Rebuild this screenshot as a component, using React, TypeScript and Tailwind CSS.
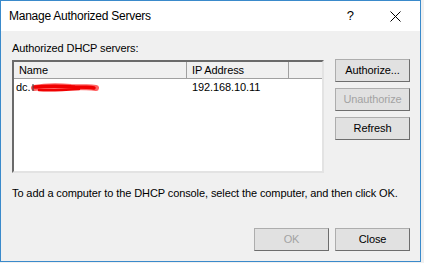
import React from "react";

// Windows-style "Manage Authorized Servers" DHCP dialog
const sans = "font-['Liberation_Sans',Arial,sans-serif]";

function WinButton({
  label,
  disabled = false,
}: {
  label: string;
  disabled?: boolean;
}) {
  return (
    <div
      className={`flex h-[23px] w-[75px] items-center justify-center border border-[#adadad] border-b-[#6d6d6d] border-r-[#6d6d6d] bg-[#e1e1e1] text-[11px] ${
        disabled ? "text-[#a3a3a3]" : "text-black"
      }`}
    >
      {label}
    </div>
  );
}

function HeaderCell({ label, width }: { label: string; width: string }) {
  return (
    <div
      className={`flex h-full items-center border-r border-r-[#a0a0a0] pl-[5px] ${width}`}
    >
      {label}
    </div>
  );
}

// Red marker scribble hiding the server name
function Redaction() {
  return (
    <svg width="68" height="12" viewBox="0 0 68 12" className="ml-[1px]">
      <path
        d="M3 6 C14 4, 28 4, 40 5 C50 5, 58 5, 65 6"
        stroke="#ff3030"
        strokeOpacity="0.75"
        strokeWidth="6"
        strokeLinecap="round"
        fill="none"
      />
      <path
        d="M4 5 C16 4, 30 4, 44 5 C52 5, 58 5, 63 6"
        stroke="#f00000"
        strokeWidth="3.5"
        strokeLinecap="round"
        fill="none"
      />
      <path
        d="M8 8 C20 9, 34 8, 48 7"
        stroke="#f00000"
        strokeWidth="2.5"
        strokeLinecap="round"
        fill="none"
      />
      <path
        d="M2 2 L2 9"
        stroke="#333"
        strokeWidth="1"
        fill="none"
      />
    </svg>
  );
}

export default function App() {
  return (
    <div className={`h-[263px] w-[424px] bg-[#f0f0f0] ${sans}`}>
      <div className="flex h-[262px] w-[421px] flex-col border border-[#3a8acb]">
        {/* Title bar */}
        <div className="flex h-[30px] items-center bg-white pl-[8px] text-[12px] text-black">
          <span className="flex-1 tracking-[-0.25px]">Manage Authorized Servers</span>
          <span className="mr-[36px] text-[13px]">?</span>
          <svg width="11" height="11" viewBox="0 0 11 11" className="mr-[19px]">
            <path d="M0.5 0.5 L10.5 10.5 M10.5 0.5 L0.5 10.5" stroke="#000" strokeWidth="1" />
          </svg>
        </div>

        {/* Body */}
        <div className="flex flex-1 flex-col bg-[#f0f0f0] pl-[11px] pr-[10px] text-[11px] tracking-[-0.1px] text-black">
          <div className="mt-[11px] h-[13px] leading-[13px]">Authorized DHCP servers:</div>

          <div className="mt-[4px] flex items-start">
            {/* List view */}
            <div className="mt-[1px] flex h-[113px] w-[312px] flex-col border-2 border-[#6a6a6a] border-b-[#e3e3e3] border-r-[#e3e3e3] bg-white">
              <div className="flex h-[17px] border-b border-b-[#a0a0a0] bg-[#f0f0f0] leading-[17px]">
                <HeaderCell label="Name" width="w-[173px]" />
                <HeaderCell label="IP Address" width="w-[102px]" />
                <div className="flex-1" />
              </div>
              <div className="flex h-[17px] items-center">
                <div className="flex w-[173px] items-center pl-[2px]">
                  <span>dc.</span>
                  <Redaction />
                </div>
                <div className="pl-[5px]">192.168.10.11</div>
              </div>
            </div>

            {/* Side buttons */}
            <div className="ml-[11px] flex flex-col gap-[6px]">
              <WinButton label="Authorize..." />
              <WinButton label="Unauthorize" disabled />
              <WinButton label="Refresh" />
            </div>
          </div>

          <div className="mt-[14px] h-[13px] leading-[13px]">
            To add a computer to the DHCP console, select the computer, and then click OK.
          </div>

          <div className="mt-[28px] flex justify-end gap-[6px]">
            <WinButton label="OK" disabled />
            <WinButton label="Close" />
          </div>
        </div>
      </div>
    </div>
  );
}
